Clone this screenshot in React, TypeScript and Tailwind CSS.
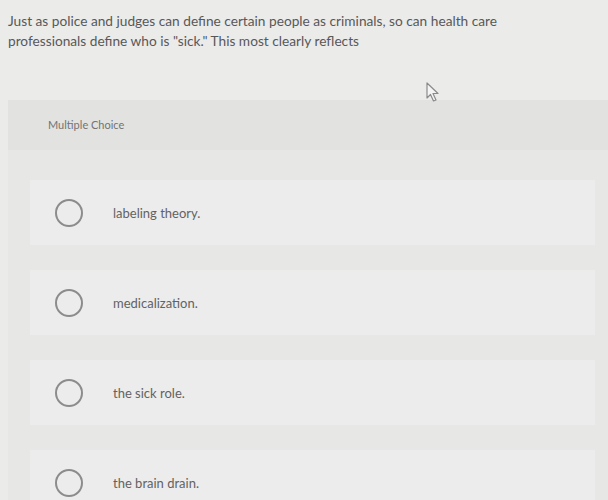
import React from "react";

const options = ["labeling theory.", "medicalization.", "the sick role.", "the brain drain."];

export default function App() {
  return (
    <div
      className="relative w-[608px] h-[500px] overflow-hidden bg-[#ebebea]"
      style={{ fontFamily: "Lato, 'Open Sans', sans-serif" }}
    >
      <p className="pl-2 pt-[11px] text-[13.7px] leading-[20px] text-[#585858]">
        Just as police and judges can define certain people as criminals, so can health care
        <br />
        professionals define who is "sick." This most clearly reflects
      </p>

      <div className="mt-[49px] ml-2">
        <div className="h-[50px] bg-[#e2e2e1] flex items-center pl-10 text-[11px] text-[#737373]">
          Multiple Choice
        </div>
        <div className="bg-[#e7e7e6] pt-[30px] pl-[22px] pr-[13px] pb-[20px] flex flex-col gap-[25px]">
          {options.map((o) => (
            <div key={o} className="h-[65px] bg-[#edecec] flex items-center pl-[25px]">
              <div className="w-[28px] h-[28px] rounded-full border-2 border-[#8c8c8c] shrink-0" />
              <span className="ml-[30px] pt-[2px] text-[13px] text-[#626262]">{o}</span>
            </div>
          ))}
        </div>
      </div>

      <svg
        className="absolute left-[426px] top-[82px]"
        width="16"
        height="22"
        viewBox="0 0 16 22"
      >
        <path
          d="M1 1 L1 16 L4.5 12.5 L7.5 19 L10 18 L7 11.5 L12 11.5 Z"
          fill="#f4f4f4"
          stroke="#8a8a8a"
          strokeWidth="1.2"
          strokeLinejoin="round"
        />
      </svg>
    </div>
  );
}
